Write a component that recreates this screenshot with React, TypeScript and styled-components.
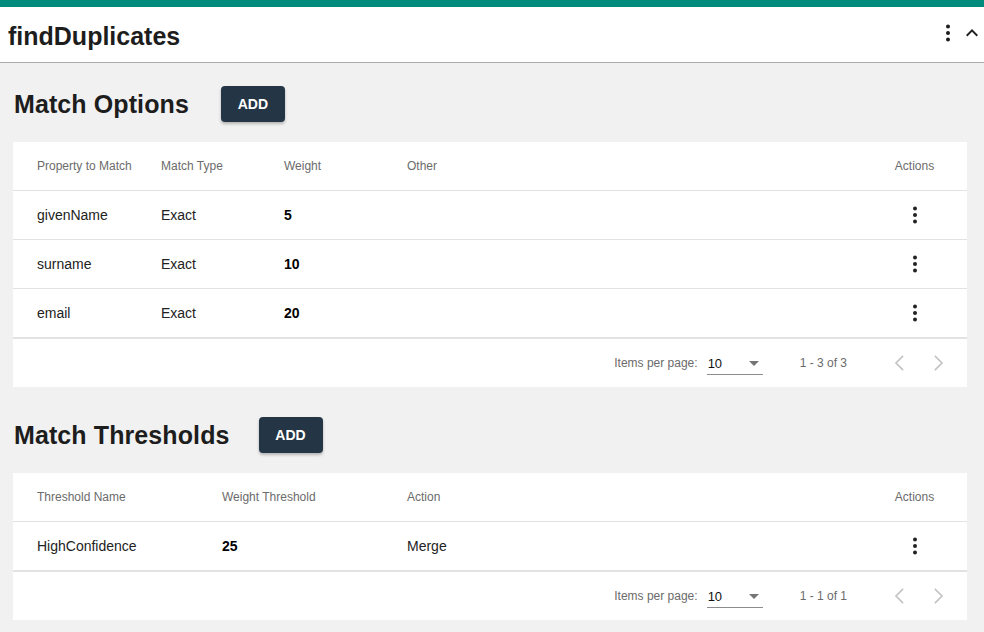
import React from "react";
import styled, { createGlobalStyle } from "styled-components";

const GlobalStyle = createGlobalStyle`
  html, body {
    margin: 0;
    padding: 0;
    background: #f1f1f1;
    font-family: "Liberation Sans", Arial, Helvetica, sans-serif;
    color: #222;
  }
  * { box-sizing: border-box; }
`;

const TopBar = styled.div`
  height: 7px;
  background: #008b7d;
`;

const Header = styled.header`
  height: 56px;
  background: #fff;
  border-bottom: 1px solid #ababab;
  display: flex;
  align-items: center;
  justify-content: space-between;
  padding-left: 8px;
`;

const Title = styled.h1`
  margin: 3px 0 0;
  font-size: 25px;
  font-weight: 700;
  color: #1d1d1d;
`;

const HeaderIcons = styled.div`
  display: flex;
  align-items: center;
  margin-top: -4px;
`;

const IconBox = styled.span<{ $color?: string; $size?: number }>`
  display: inline-flex;
  width: ${(p) => p.$size ?? 24}px;
  height: ${(p) => p.$size ?? 24}px;
  align-items: center;
  justify-content: center;
  color: ${(p) => p.$color ?? "#222"};
  svg { display: block; }
`;

const Content = styled.main`
  padding: 0 17px 0 13px;
`;

const SectionHeader = styled.div`
  display: flex;
  align-items: center;
  padding: 23px 0 20px 1px;
`;

const SectionTitle = styled.h2`
  margin: 0;
  font-size: 25px;
  font-weight: 700;
  color: #1d1d1d;
  letter-spacing: 0.1px;
`;

const AddButton = styled.button<{ $gap: number }>`
  margin-left: ${(p) => p.$gap}px;
  width: 64px;
  height: 36px;
  border: none;
  border-radius: 4px;
  background: #243646;
  color: #fff;
  font-family: "Liberation Sans", Arial, sans-serif;
  font-size: 14px;
  font-weight: 700;
  box-shadow: 0 2px 3px rgba(0, 0, 0, 0.25);
  cursor: pointer;
`;

const Card = styled.section`
  background: #fff;
  margin-bottom: 7px;
`;

const Row = styled.div<{ $cols: string }>`
  display: grid;
  grid-template-columns: ${(p) => p.$cols};
  align-items: center;
  height: 49px;
  padding: 0 24px;
  border-bottom: 1px solid #e2e2e2;
`;

const HeadCell = styled.div<{ $center?: boolean }>`
  font-size: 12px;
  color: #6b6b6b;
  text-align: ${(p) => (p.$center ? "center" : "left")};
`;

const Cell = styled.div<{ $bold?: boolean; $center?: boolean }>`
  font-size: 14px;
  color: ${(p) => (p.$bold ? "#000" : "#222")};
  font-weight: ${(p) => (p.$bold ? 700 : 400)};
  display: flex;
  justify-content: ${(p) => (p.$center ? "center" : "flex-start")};
`;

const Footer = styled.div`
  height: 49px;
  border-top: 1px solid #e2e2e2;
  display: flex;
  align-items: center;
  justify-content: flex-end;
  padding-right: 8px;
  font-size: 12px;
  color: #6b6b6b;
`;

const Select = styled.div`
  margin-left: 9px;
  width: 56px;
  height: 24px;
  border-bottom: 1px solid #8c8c8c;
  display: flex;
  align-items: center;
  justify-content: space-between;
  padding: 2px 4px 0 1px;
  font-size: 13px;
  color: #111;
`;

const Arrow = styled.span`
  width: 0;
  height: 0;
  border-left: 5px solid transparent;
  border-right: 5px solid transparent;
  border-top: 5px solid #757575;
`;

const Range = styled.span`
  margin: 0 32px 0 37px;
`;

const PageButton = styled.span`
  width: 40px;
  height: 40px;
  display: inline-flex;
  align-items: center;
  justify-content: center;
`;

const Kebab = ({ color = "#222" }: { color?: string }) => (
  <svg width="24" height="24" viewBox="0 0 24 24" fill={color}>
    <circle cx="12" cy="5.6" r="2" />
    <circle cx="12" cy="12" r="2" />
    <circle cx="12" cy="18.4" r="2" />
  </svg>
);

const ExpandLess = () => (
  <svg width="24" height="24" viewBox="0 0 24 24" fill="#222">
    <path d="M12 8l-6 6 1.41 1.41L12 10.83l4.59 4.58L18 14z" />
  </svg>
);

const Chevron = ({ dir }: { dir: "left" | "right" }) => (
  <svg width="24" height="24" viewBox="0 0 24 24" fill="none" stroke="#c4c4c4" strokeWidth="1.7" strokeLinecap="square">
    {dir === "left" ? <polyline points="15.5,5.5 9,12 15.5,18.5" /> : <polyline points="8.5,5.5 15,12 8.5,18.5" />}
  </svg>
);

type Column = { label: string; center?: boolean };

const TableCard = ({
  cols,
  columns,
  rows,
  boldIndex,
  range,
}: {
  cols: string;
  columns: Column[];
  rows: string[][];
  boldIndex: number;
  range: string;
}) => (
  <Card>
    <Row $cols={cols}>
      {columns.map((c) => (
        <HeadCell key={c.label} $center={c.center}>
          {c.label}
        </HeadCell>
      ))}
    </Row>
    {rows.map((r, i) => (
      <Row $cols={cols} key={i}>
        {r.map((v, j) => (
          <Cell key={j} $bold={j === boldIndex}>
            {v}
          </Cell>
        ))}
        <Cell $center>
          <IconBox>
            <Kebab />
          </IconBox>
        </Cell>
      </Row>
    ))}
    <Footer>
      <span>Items per page:</span>
      <Select>
        <span>10</span>
        <Arrow />
      </Select>
      <Range>{range}</Range>
      <PageButton>
        <Chevron dir="left" />
      </PageButton>
      <PageButton>
        <Chevron dir="right" />
      </PageButton>
    </Footer>
  </Card>
);

export default function App() {
  return (
    <>
      <GlobalStyle />
      <TopBar />
      <Header>
        <Title>findDuplicates</Title>
        <HeaderIcons>
          <IconBox>
            <Kebab color="#1d1d1d" />
          </IconBox>
          <IconBox>
            <ExpandLess />
          </IconBox>
        </HeaderIcons>
      </Header>
      <Content>
        <SectionHeader>
          <SectionTitle>Match Options</SectionTitle>
          <AddButton $gap={32}>ADD</AddButton>
        </SectionHeader>
        <TableCard
          cols="124px 123px 123px 1fr 57px"
          columns={[
            { label: "Property to Match" },
            { label: "Match Type" },
            { label: "Weight" },
            { label: "Other" },
            { label: "Actions", center: true },
          ]}
          rows={[
            ["givenName", "Exact", "5", ""],
            ["surname", "Exact", "10", ""],
            ["email", "Exact", "20", ""],
          ]}
          boldIndex={2}
          range="1 - 3 of 3"
        />
        <SectionHeader>
          <SectionTitle>Match Thresholds</SectionTitle>
          <AddButton $gap={29}>ADD</AddButton>
        </SectionHeader>
        <TableCard
          cols="185px 185px 1fr 57px"
          columns={[
            { label: "Threshold Name" },
            { label: "Weight Threshold" },
            { label: "Action" },
            { label: "Actions", center: true },
          ]}
          rows={[["HighConfidence", "25", "Merge"]]}
          boldIndex={1}
          range="1 - 1 of 1"
        />
      </Content>
    </>
  );
}
